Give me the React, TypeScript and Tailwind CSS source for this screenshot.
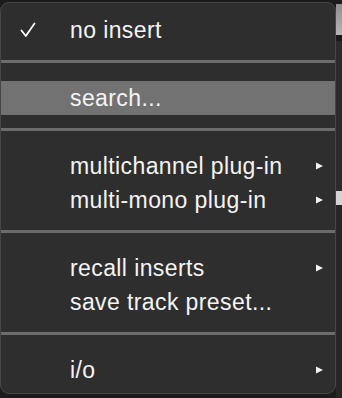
import { ReactNode } from "react";

type Item = { label: string; checked?: boolean; sub?: boolean; active?: boolean };

const groups: Item[][] = [
  [{ label: "no insert", checked: true }],
  [{ label: "search...", active: true }],
  [
    { label: "multichannel plug-in", sub: true },
    { label: "multi-mono plug-in", sub: true },
  ],
  [
    { label: "recall inserts", sub: true },
    { label: "save track preset..." },
  ],
  [{ label: "i/o", sub: true }],
];

function Check() {
  return (
    <svg width="16" height="16" viewBox="0 0 16 16" className="text-white">
      <path d="M1.5 8.5 L5.8 14 L14.5 1.5" fill="none" stroke="currentColor" strokeWidth="1.8" strokeLinecap="round" strokeLinejoin="round" />
    </svg>
  );
}

function Arrow() {
  return (
    <svg width="7" height="8" viewBox="0 0 7 8">
      <path d="M0 0.5 L7 4 L0 7.5 Z" fill="#f2f2f2" />
    </svg>
  );
}

function Row({ item }: { item: Item }) {
  return (
    <div className={`flex h-[34px] items-center ${item.active ? "bg-[#727272]" : ""}`}>
      <div className="flex w-[69px] shrink-0 justify-start pl-[19px]">{item.checked && <Check />}</div>
      <span className="flex-1 text-[#f4f4f4]">{item.label}</span>
      <div className="w-[19px] shrink-0">{item.sub && <Arrow />}</div>
    </div>
  );
}

function Sep() {
  return <div className="mt-[13px] mb-[18px] h-[3px] bg-[#6c6c6c]" />;
}

function RightEdge(): ReactNode {
  return (
    <div className="flex w-[6px] flex-col">
      <div className="h-[4px] bg-[#1c1c1c]" />
      <div className="h-[31px] bg-gradient-to-b from-[#8f8f8f] to-[#b4b4b4]" />
      <div className="h-[6px] bg-[#1a1a1a]" />
      <div className="h-[150px] bg-[#2b2b2b]" />
      <div className="h-[14px] bg-[#d4d4d4]" />
      <div className="flex-1 bg-[#262626]" />
    </div>
  );
}

export default function App() {
  return (
    <div
      className="flex h-[398px] w-[342px] bg-[#1c1c1c] text-[23px] tracking-[0.4px]"
      style={{ fontFamily: '"Liberation Sans", Arial, sans-serif' }}
    >
      <div className="mt-[2px] h-[392px] w-[336px] rounded-[9px] border border-[#464646] bg-[#2e2e2e] pt-[10px]">
        {groups.map((g, i) => (
          <div key={i}>
            {i > 0 && <Sep />}
            {g.map((it) => (
              <Row key={it.label} item={it} />
            ))}
          </div>
        ))}
      </div>
      <RightEdge />
    </div>
  );
}
